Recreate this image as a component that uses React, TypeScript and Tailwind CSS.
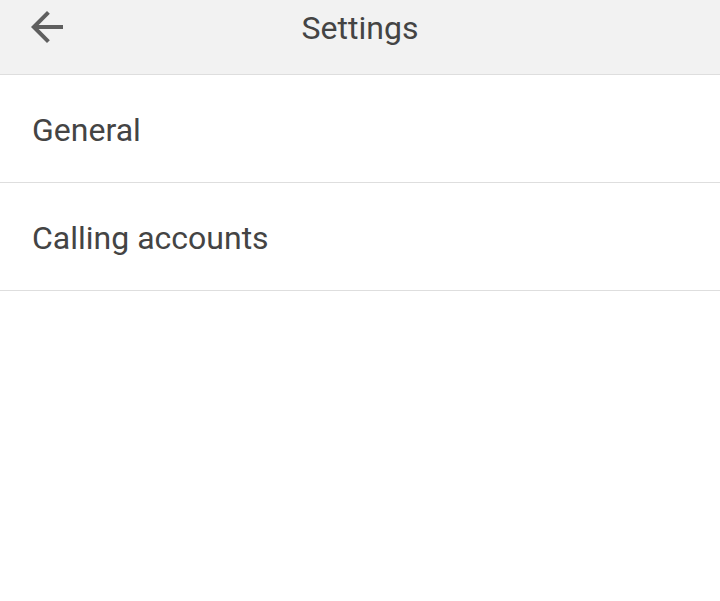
import React from "react";

export default function App() {
  return (
    <div className="w-[720px] h-[601px] bg-white overflow-hidden" style={{ fontFamily: "Roboto, 'Noto Sans', sans-serif" }}>
      <div className="relative h-[75px] bg-[#f2f2f2] border-b border-[#dedede] flex items-start justify-center">
        <svg className="absolute left-[23px] top-[3px]" width="48" height="48" viewBox="0 0 24 24" fill="#5f5f5f">
          <path d="M20 11H7.83l5.59-5.59L12 4l-8 8 8 8 1.41-1.41L7.83 13H20v-2z" />
        </svg>
        <div className="text-[32px] leading-none text-[#444444] mt-[12px]">Settings</div>
      </div>
      <div className="h-[108px] border-b border-[#dedede] flex items-center pl-[32px] pt-[3px]">
        <span className="text-[32px] leading-none text-[#444444]">General</span>
      </div>
      <div className="h-[108px] border-b border-[#dedede] flex items-center pl-[32px] pt-[3px]">
        <span className="text-[32px] leading-none text-[#444444]">Calling accounts</span>
      </div>
    </div>
  );
}
